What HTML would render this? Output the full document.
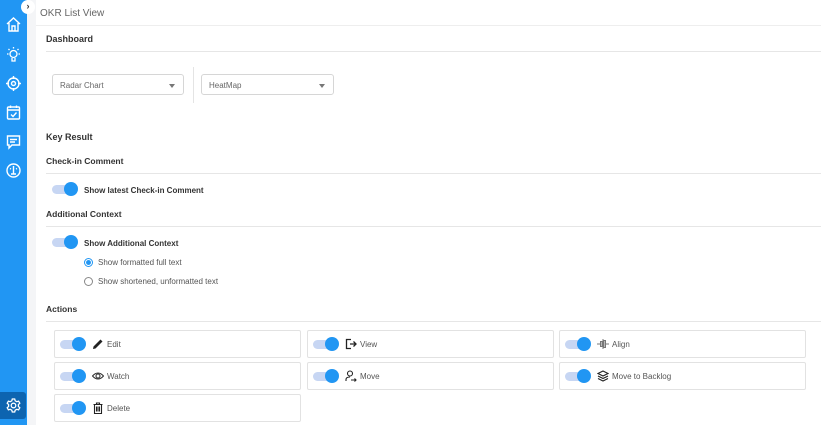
<!DOCTYPE html>
<html><head><style>
*{margin:0;padding:0;box-sizing:border-box}
body{width:821px;height:425px;overflow:hidden;background:#fff;font-family:"Liberation Sans",sans-serif;position:relative;color:#333}
.abs{position:absolute}
.sb{left:0;top:0;width:27px;height:425px;background:#2196f3}
.gap{left:27px;top:0;width:9px;height:425px;background:#f4f5f7}
.ic{position:absolute;left:5px;width:17px;height:17px}
.h{font-size:9px;font-weight:bold;color:#333}
.line{height:1px;background:#e6e6e6;left:46px;right:0}
.dd{height:21px;border:1px solid #d6d6d6;border-radius:3px;font-size:8px;color:#666;padding:6px 0 0 7px}
.dd:after{content:"";position:absolute;right:8px;top:9px;border:3px solid transparent;border-top:4px solid #777}
.tg{width:27px;height:16px}
.tg:before{content:"";position:absolute;left:0;top:4px;width:24px;height:9px;border-radius:5px;background:#c7d6f3}
.tg:after{content:"";position:absolute;left:12px;top:1px;width:14px;height:14px;border-radius:50%;background:#2196f3}
.lbl{font-size:8px;font-weight:bold;color:#333}
.card{width:247px;height:28px;border:1px solid #e2e2e2;border-radius:2px}
.card .tg{position:absolute;left:5px;top:5px}
.card svg{position:absolute;left:37px;top:7px}
.card span{position:absolute;left:52px;top:9px;font-size:8px;color:#555}
.rd{width:9px;height:9px;border-radius:50%;border:1px solid #888}
.rt{font-size:8px;color:#555}
</style></head><body>
<div class="abs sb"></div>
<div class="abs gap"></div>
<div class="abs" style="left:21px;top:0;width:14px;height:14px;border-radius:50%;background:#fff;font-size:9px;font-weight:bold;text-align:center;line-height:12px;color:#333">›</div>
<svg class="ic" style="top:16px" viewBox="0 0 17 17" fill="none" stroke="#fff" stroke-width="1.4"><path d="M2 8L8.5 2L15 8M4 7V15H13V7M7 15V10H10V15"/></svg>
<svg class="ic" style="top:46px" viewBox="0 0 17 17" fill="none" stroke="#fff" stroke-width="1.3"><circle cx="8.5" cy="8" r="3.5"/><path d="M7 12V15H10V12M8.5 1V2.5M2 8H3.5M13.5 8H15M3.5 3L4.5 4M13.5 3L12.5 4"/></svg>
<svg class="ic" style="top:75px" viewBox="0 0 17 17" fill="none" stroke="#fff" stroke-width="1.4"><circle cx="8.5" cy="8.5" r="5.5"/><circle cx="8.5" cy="8.5" r="2"/><path d="M8.5 1V4M8.5 13V16M1 8.5H4M13 8.5H16"/></svg>
<svg class="ic" style="top:104px" viewBox="0 0 17 17" fill="none" stroke="#fff" stroke-width="1.4"><rect x="2.5" y="3" width="12" height="12" rx="1"/><path d="M2.5 6H14.5M5.5 1.5V4M11.5 1.5V4M6 10.5L8 12.5L11.5 8.5"/></svg>
<svg class="ic" style="top:133px" viewBox="0 0 17 17" fill="none" stroke="#fff" stroke-width="1.4"><path d="M2.5 3H14.5V12H7L4 15V12H2.5Z"/><path d="M5 6.5H12M5 9H10"/></svg>
<svg class="ic" style="top:162px" viewBox="0 0 17 17" fill="none" stroke="#fff" stroke-width="1.4"><circle cx="8.5" cy="8.5" r="6.5"/><path d="M8.5 4V12M6 12H11M5 6.5L6 7M12 6.5L11 7"/></svg>
<div class="abs" style="left:0;top:392px;width:26px;height:27px;background:#0d64b0;border-radius:0 3px 3px 0"></div>
<svg class="ic" style="top:397px" viewBox="0 0 17 17" fill="none" stroke="#fff" stroke-width="1.3"><circle cx="8.5" cy="8.5" r="2.3"/><path d="M7.3 2H9.7L10.2 3.8L11.8 4.7L13.6 4.1L14.8 6.2L13.4 7.5V9.5L14.8 10.8L13.6 12.9L11.8 12.3L10.2 13.2L9.7 15H7.3L6.8 13.2L5.2 12.3L3.4 12.9L2.2 10.8L3.6 9.5V7.5L2.2 6.2L3.4 4.1L5.2 4.7L6.8 3.8Z"/></svg>

<div class="abs" style="left:40px;top:8px;font-size:10px;color:#666">OKR List View</div>
<div class="abs" style="left:36px;right:0;top:25px;height:1px;background:#eee"></div>
<div class="abs h" style="left:46px;top:34px">Dashboard</div>
<div class="abs line" style="top:51px"></div>
<div class="abs dd" style="left:52px;top:74px;width:132px">Radar Chart</div>
<div class="abs" style="left:193px;top:67px;width:1px;height:36px;background:#e4e4e4"></div>
<div class="abs dd" style="left:201px;top:74px;width:133px">HeatMap</div>
<div class="abs h" style="left:46px;top:132px">Key Result</div>
<div class="abs h" style="left:46px;top:156px;font-size:8.5px">Check-in Comment</div>
<div class="abs line" style="top:173px"></div>
<div class="abs tg" style="left:52px;top:181px"></div>
<div class="abs lbl" style="left:84px;top:186px">Show latest Check-in Comment</div>
<div class="abs h" style="left:46px;top:209px;font-size:8.5px">Additional Context</div>
<div class="abs line" style="top:226px"></div>
<div class="abs tg" style="left:52px;top:234px"></div>
<div class="abs lbl" style="left:84px;top:239px">Show Additional Context</div>
<div class="abs rd" style="left:84px;top:258px;border-color:#2196f3;background:radial-gradient(#2196f3 2.2px,#fff 2.7px)"></div>
<div class="abs rt" style="left:98px;top:258px">Show formatted full text</div>
<div class="abs rd" style="left:84px;top:277px"></div>
<div class="abs rt" style="left:98px;top:277px">Show shortened, unformatted text</div>
<div class="abs h" style="left:46px;top:304px;font-size:8.5px">Actions</div>
<div class="abs line" style="top:321px"></div>

<div class="abs card" style="left:54px;top:330px"><div class="tg"></div><svg width="12" height="12" viewBox="0 0 12 12"><path d="M1 11L1.5 8.5L8.5 1.5L10.5 3.5L3.5 10.5Z" fill="#222"/></svg><span>Edit</span></div>
<div class="abs card" style="left:307px;top:330px"><div class="tg"></div><svg width="12" height="12" viewBox="0 0 12 12" fill="none" stroke="#222" stroke-width="1.3"><path d="M6 1.5H1.5V10.5H6M5 6H11M8.5 3.5L11 6L8.5 8.5"/></svg><span>View</span></div>
<div class="abs card" style="left:559px;top:330px"><div class="tg"></div><svg width="12" height="12" viewBox="0 0 12 12" fill="none" stroke="#777" stroke-width="1"><path d="M0 6H3M9 6H12M6 1V11M3.5 3.5H5V8.5H3.5ZM7 2.5H8.5V9.5H7Z"/></svg><span>Align</span></div>
<div class="abs card" style="left:54px;top:362px"><div class="tg"></div><svg width="12" height="12" viewBox="0 0 12 12" fill="none" stroke="#333" stroke-width="1.1"><path d="M0.5 6Q6 0 11.5 6Q6 12 0.5 6Z"/><circle cx="6" cy="6" r="2"/></svg><span>Watch</span></div>
<div class="abs card" style="left:307px;top:362px"><div class="tg"></div><svg width="12" height="12" viewBox="0 0 12 12" fill="none" stroke="#222" stroke-width="1.1"><circle cx="5" cy="3.5" r="2.5"/><path d="M1 11V9.5Q1 7 5 7M6 10H11M9.5 8.5L11 10L9.5 11.5"/></svg><span>Move</span></div>
<div class="abs card" style="left:559px;top:362px"><div class="tg"></div><svg width="12" height="12" viewBox="0 0 12 12" fill="none" stroke="#222" stroke-width="1.1"><path d="M6 1L11 3.5L6 6L1 3.5ZM1 6L6 8.5L11 6M1 8.5L6 11L11 8.5"/></svg><span>Move to Backlog</span></div>
<div class="abs card" style="left:54px;top:394px"><div class="tg"></div><svg width="12" height="12" viewBox="0 0 12 12" fill="none" stroke="#222" stroke-width="1.1"><path d="M1.5 2.5H10.5M4.5 2.5V1H7.5V2.5M2.5 2.5V11.5H9.5V2.5M4.5 4.5V9.5M6 4.5V9.5M7.5 4.5V9.5"/></svg><span>Delete</span></div>
</body></html>
